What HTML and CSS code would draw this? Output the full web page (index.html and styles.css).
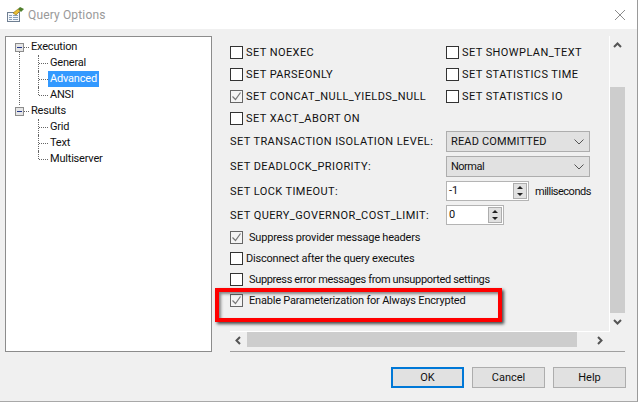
FILE: index.html
```html
<!DOCTYPE html>
<html lang="en">
<head>
    <meta charset="UTF-8">
    <meta name="viewport" content="width=device-width, initial-scale=1.0">
    <title>Query Options</title>
    <link rel="stylesheet" href="styles.css">
</head>
<body>
    <div class="dialog">
        <div class="title-bar">
            <svg class="title-icon" width="17" height="16" viewBox="0 0 17 16">
                <rect x="0.5" y="5.5" width="12" height="9" fill="#f4f7fb" stroke="#6f7f92"/>
                <path d="M2 8.5h3M2 10.5h3M2 12.5h3M6 8.5h5M6 10.5h5M6 12.5h5" stroke="#8aa0b8"/>
                <path d="M6 6l5-4 3 1-5 5z" fill="#e8bc34" stroke="#8a6d12" stroke-width="0.6"/>
                <path d="M11 2l2-2 4 2-3 3z" fill="#4f7f2c"/>
            </svg>
            <span class="title-text">Query Options</span>
            <svg class="close-icon" width="10" height="10" viewBox="0 0 10 10">
                <path d="M0 0l10 10M10 0L0 10" stroke="#8c8c8c" fill="none"/>
            </svg>
        </div>

        <div class="dialog-body">
            <ul class="tree">
                <li class="tree-node">
                    <div class="tree-row"><span class="expander"></span><span class="tree-label">Execution</span></div>
                    <ul class="tree-children">
                        <li><span class="tree-label">General</span></li>
                        <li><span class="tree-label selected">Advanced</span></li>
                        <li><span class="tree-label">ANSI</span></li>
                    </ul>
                </li>
                <li class="tree-node">
                    <div class="tree-row"><span class="expander"></span><span class="tree-label">Results</span></div>
                    <ul class="tree-children">
                        <li><span class="tree-label">Grid</span></li>
                        <li><span class="tree-label">Text</span></li>
                        <li><span class="tree-label">Multiserver</span></li>
                    </ul>
                </li>
            </ul>

            <div class="options">
                <div class="options-view">
                    <div class="options-content">
                        <div class="check-grid">
                            <label class="check-row caps"><span class="box"></span>SET NOEXEC</label>
                            <label class="check-row caps"><span class="box"></span>SET PARSEONLY</label>
                            <label class="check-row caps"><span class="box checked"><svg width="11" height="11" viewBox="0 0 11 11"><path d="M1.5 5.5l3 3 5-7" fill="none" stroke="#777" stroke-width="1.2"/></svg></span>SET CONCAT_NULL_YIELDS_NULL</label>
                            <label class="check-row caps"><span class="box"></span>SET XACT_ABORT ON</label>
                            <label class="check-row caps"><span class="box"></span>SET SHOWPLAN_TEXT</label>
                            <label class="check-row caps"><span class="box"></span>SET STATISTICS TIME</label>
                            <label class="check-row caps"><span class="box"></span>SET STATISTICS IO</label>
                        </div>

                        <div class="setting-row select-row">
                            <span class="caps">SET TRANSACTION ISOLATION LEVEL:</span>
                            <div class="select-box"><span class="select-value">READ COMMITTED</span><svg width="10" height="6" viewBox="0 0 10 6"><path d="M0.5 0.5l4.5 4.5 4.5-4.5" fill="none" stroke="#555"/></svg></div>
                        </div>
                        <div class="setting-row select-row">
                            <span class="caps">SET DEADLOCK_PRIORITY:</span>
                            <div class="select-box"><span class="normal-value">Normal</span><svg width="10" height="6" viewBox="0 0 10 6"><path d="M0.5 0.5l4.5 4.5 4.5-4.5" fill="none" stroke="#555"/></svg></div>
                        </div>
                        <div class="setting-row spin-row">
                            <span class="caps">SET LOCK TIMEOUT:</span>
                            <div class="spin-group">
                                <div class="spin-box lock-box">-1<span class="spin-btns"><span class="spin-up"></span><span class="spin-down"></span></span></div>
                                <span class="unit">milliseconds</span>
                            </div>
                        </div>
                        <div class="setting-row spin-row">
                            <span class="caps">SET QUERY_GOVERNOR_COST_LIMIT:</span>
                            <div class="spin-group">
                                <div class="spin-box cost-box">0<span class="spin-btns"><span class="spin-up"></span><span class="spin-down"></span></span></div>
                            </div>
                        </div>

                        <div class="bottom-checks">
                            <label class="check-row wide"><span class="box checked"><svg width="11" height="11" viewBox="0 0 11 11"><path d="M1.5 5.5l3 3 5-7" fill="none" stroke="#777" stroke-width="1.2"/></svg></span>Suppress provider message headers</label>
                            <label class="check-row"><span class="box"></span>Disconnect after the query executes</label>
                            <label class="check-row wide tight"><span class="box"></span>Suppress error messages from unsupported settings</label>
                            <label class="check-row wide"><span class="box checked"><svg width="11" height="11" viewBox="0 0 11 11"><path d="M1.5 5.5l3 3 5-7" fill="none" stroke="#777" stroke-width="1.2"/></svg></span>Enable Parameterization for Always Encrypted</label>
                        </div>
                    </div>

                    <div class="vscroll">
                        <svg width="9" height="6" viewBox="0 0 9 6"><path d="M1 5l3.5-3.5L8 5" fill="none" stroke="#555" stroke-width="2"/></svg>
                        <div class="vscroll-thumb"></div>
                        <svg width="9" height="6" viewBox="0 0 9 6"><path d="M1 1l3.5 3.5L8 1" fill="none" stroke="#555" stroke-width="2"/></svg>
                    </div>
                </div>

                <div class="hscroll">
                    <svg width="6" height="9" viewBox="0 0 6 9"><path d="M5 1L1.5 4.5 5 8" fill="none" stroke="#555" stroke-width="2"/></svg>
                    <div class="hscroll-thumb"></div>
                    <svg width="6" height="9" viewBox="0 0 6 9"><path d="M1 1l3.5 3.5L1 8" fill="none" stroke="#555" stroke-width="2"/></svg>
                </div>

                <div class="highlight-box"></div>
            </div>
        </div>

        <div class="button-bar">
            <button class="dlg-btn default-btn">OK</button>
            <button class="dlg-btn">Cancel</button>
            <button class="dlg-btn">Help</button>
        </div>
    </div>
</body>
</html>
```

FILE: styles.css
```css
* {
    margin: 0;
    padding: 0;
    box-sizing: border-box;
    font-family: Roboto, 'Liberation Sans', sans-serif;
}

body {
    background-color: #f0f0f0;
    color: #111;
    font-size: 11px;
}

ul {
    list-style: none;
}

.dialog {
    width: 638px;
    height: 402px;
    display: flex;
    flex-direction: column;
    background-color: #f0f0f0;
    border-right: 1px solid #9a9a9a;
    border-bottom: 1px solid #a8a8a8;
    overflow: hidden;
}

.title-bar {
    height: 29px;
    flex: none;
    display: flex;
    align-items: center;
    padding: 0 12px 0 7px;
    background-color: #fff;
}

.title-icon {
    margin-right: 4px;
}

.title-text {
    flex: 1;
    font-size: 12px;
    letter-spacing: 0.15px;
    color: #999;
}

.dialog-body {
    height: 323px;
    flex: none;
    display: flex;
    padding: 7px 0 0 5px;
}

/* tree on the left */
.tree {
    width: 207px;
    height: 316px;
    flex: none;
    padding: 2px 0 0 9px;
    background-color: #fff;
    border: 1px solid #8c8c8c;
    letter-spacing: -0.2px;
}

.tree-row {
    height: 16px;
    display: flex;
    align-items: center;
}

.tree-node {
    position: relative;
}

.tree-node:first-child::before {
    content: "";
    position: absolute;
    left: 4px;
    top: 12px;
    height: 54px;
    border-left: 1px dotted #666;
}

.expander {
    position: relative;
    width: 9px;
    height: 9px;
    margin-right: 7px;
    flex: none;
    background-color: #e6e6e6;
    border: 1px solid #8c8c8c;
    z-index: 1;
}

.expander::before {
    content: "";
    position: absolute;
    left: 1px;
    top: 3px;
    width: 5px;
    height: 1px;
    background-color: #23378c;
}

.expander::after {
    content: "";
    position: absolute;
    left: 8px;
    top: 3px;
    width: 5px;
    border-top: 1px dotted #666;
}

.tree-children {
    margin-left: 23px;
}

.tree-children li {
    position: relative;
    height: 16px;
    display: flex;
    align-items: center;
    padding-left: 10px;
}

.tree-children li::before {
    content: "";
    position: absolute;
    left: 0;
    top: 0;
    height: 16px;
    border-left: 1px dotted #666;
}

.tree-children li:last-child::before {
    height: 8px;
}

.tree-children li::after {
    content: "";
    position: absolute;
    left: 1px;
    top: 8px;
    width: 9px;
    border-top: 1px dotted #666;
}

.tree-label {
    padding: 0 2px;
    line-height: 16px;
}

.tree-row .tree-label {
    padding: 0;
}

.selected {
    background-color: #3399ff;
    color: #fff;
}

/* options pane */
.options {
    position: relative;
    width: 395px;
    margin-left: 18px;
    flex: none;
}

.options-view {
    height: 296px;
    display: flex;
}

.options-content {
    width: 380px;
    padding-top: 5px;
    border-right: 1px solid #fff;
    border-bottom: 1px solid #fff;
}

.caps {
    letter-spacing: 0.42px;
}

.check-grid {
    display: grid;
    grid-template-columns: 216px 1fr;
    grid-template-rows: repeat(4, 22px);
    grid-auto-flow: column;
    margin-bottom: 2px;
}

.check-row {
    height: 22px;
    display: flex;
    align-items: center;
    gap: 3px;
    white-space: nowrap;
}

.box {
    width: 13px;
    height: 13px;
    flex: none;
    display: flex;
    align-items: center;
    justify-content: center;
    background-color: #fff;
    border: 1px solid #333;
}

.box.checked {
    background-color: #f4f4f4;
    border-color: #666;
}

.setting-row {
    display: grid;
    grid-template-columns: 216px 1fr;
    align-items: center;
    white-space: nowrap;
}

.select-row {
    height: 21px;
    margin-bottom: 4px;
}

.spin-row {
    height: 20px;
    margin-bottom: 4px;
}

.select-box {
    width: 144px;
    height: 21px;
    display: flex;
    align-items: center;
    justify-content: space-between;
    padding: 0 5px 0 4px;
    background-color: #e1e1e1;
    border: 1px solid #adadad;
}

.select-value {
    letter-spacing: 0.15px;
}

.normal-value {
    letter-spacing: -0.5px;
}

.spin-group {
    display: flex;
    align-items: center;
}

.spin-box {
    height: 20px;
    display: flex;
    justify-content: space-between;
    padding: 1px 1px 1px 2px;
    background-color: #fff;
    border: 1px solid #b4b4b4;
    line-height: 16px;
}

.lock-box {
    width: 83px;
}

.cost-box {
    width: 58px;
}

.spin-btns {
    width: 14px;
    display: flex;
    flex-direction: column;
    background-color: #e1e1e1;
    border: 1px solid #adadad;
}

.spin-up,
.spin-down {
    position: relative;
    flex: 1;
}

.spin-up::before,
.spin-down::before {
    content: "";
    position: absolute;
    left: 3px;
    border-left: 3px solid transparent;
    border-right: 3px solid transparent;
}

.spin-up::before {
    top: 2px;
    border-bottom: 3px solid #222;
}

.spin-down::before {
    bottom: 2px;
    border-top: 3px solid #222;
}

.unit {
    margin-left: 6px;
    letter-spacing: -0.5px;
}

.bottom-checks {
    margin-top: -2px;
}

.bottom-checks .check-row {
    height: 21px;
    letter-spacing: -0.2px;
}

.bottom-checks .check-row.wide {
    gap: 6px;
}

.bottom-checks .check-row.tight {
    letter-spacing: -0.35px;
}

.vscroll {
    width: 15px;
    display: flex;
    flex-direction: column;
    align-items: center;
    padding: 6px 0 7px;
}

.vscroll-thumb {
    width: 15px;
    flex: 1;
    margin: 39px 0 6px;
    background-color: #cdcdcd;
}

.hscroll {
    height: 20px;
    display: flex;
    align-items: flex-start;
    padding: 4px 7px 0 5px;
    border-bottom: 1px solid #a0a0a0;
}

.hscroll-thumb {
    width: 330px;
    height: 15px;
    margin: -4px 20px 0 6px;
    background-color: #cdcdcd;
}

/* red annotation drawn on the screenshot */
.highlight-box {
    position: absolute;
    left: -15px;
    top: 252px;
    width: 287px;
    height: 34px;
    border: 4px solid #f00;
    box-shadow: 2px 2px 3px rgba(0, 0, 0, 0.7), inset 2px 2px 3px rgba(0, 0, 0, 0.45);
}

/* buttons */
.button-bar {
    display: flex;
    justify-content: flex-end;
    gap: 8px;
    padding: 15px 11px 0 0;
}

.dlg-btn {
    width: 73px;
    height: 21px;
    background-color: #e1e1e1;
    border: 1px solid #adadad;
    font-size: 11px;
    color: #111;
}

.default-btn {
    border: 2px solid #0078d7;
}
```
